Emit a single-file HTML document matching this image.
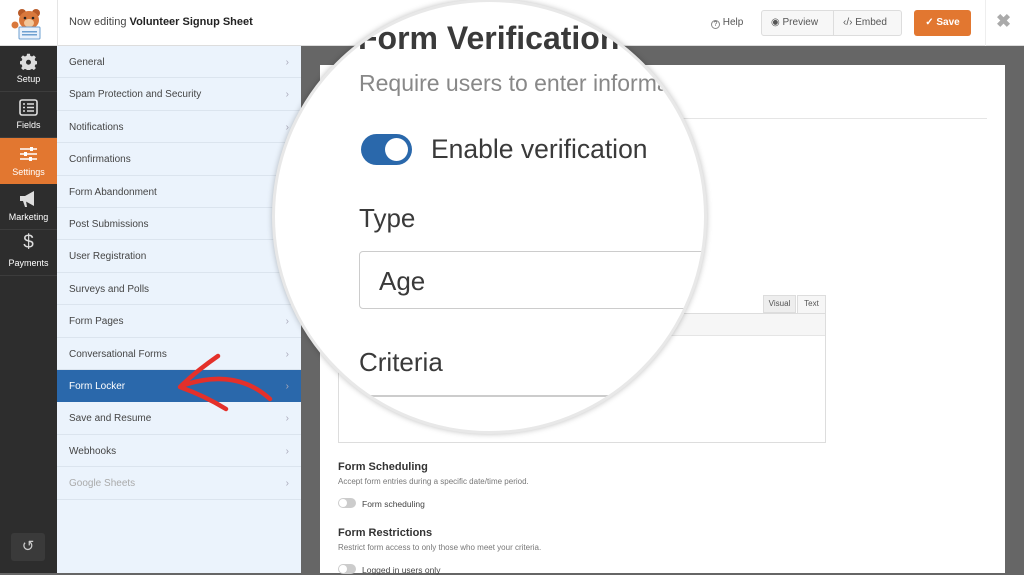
<!DOCTYPE html>
<html><head><meta charset="utf-8"><style>
*{margin:0;padding:0;box-sizing:border-box}
body{width:1024px;height:573px;overflow:hidden;font-family:"Liberation Sans",sans-serif;background:#666;position:relative}
.abs{position:absolute}
.top{left:0;top:0;width:1024px;height:46px;background:#fff;border-bottom:1px solid #ddd}
.side{left:0;top:46px;width:57px;height:527px;background:#2d2d2d}
.si{position:absolute;left:0;width:57px;height:46px;color:#fff;font-size:9px;text-align:center;border-bottom:1px solid #3c3c3c}
.si span{position:absolute;left:0;right:0;bottom:7px}
.panel{left:57px;top:46px;width:244px;height:527px;background:#ebf3fc}
.it{position:absolute;left:0;width:244px;height:32.4px;line-height:33px;padding-left:12px;font-size:10px;color:#444;border-bottom:1px solid #dbe4ee}
.it:after{content:"›";position:absolute;right:12px;color:#aab;font-size:10px}
.lbl{font-size:11px;color:#333}
</style></head><body>
<div class="abs top"></div>
<div class="abs" style="left:57px;top:0;width:1px;height:46px;background:#e5e5e5"></div>
<svg class="abs" style="left:10px;top:6px" width="38" height="34" viewBox="0 0 38 34">
<circle cx="12" cy="7" r="4" fill="#b85a28"/><circle cx="26" cy="7" r="4" fill="#b85a28"/>
<ellipse cx="19" cy="14" rx="10" ry="9" fill="#d9783c"/><ellipse cx="19" cy="17" rx="5" ry="4" fill="#f3c79a"/>
<circle cx="15" cy="12" r="1.3" fill="#222"/><circle cx="23" cy="12" r="1.3" fill="#222"/>
<circle cx="5" cy="19" r="3.5" fill="#d9783c"/>
<rect x="9" y="21" width="21" height="12" rx="1" fill="#e9f1fb" stroke="#6ea0d0"/><rect x="12" y="25" width="15" height="1.5" fill="#6ea0d0"/><rect x="12" y="28" width="15" height="1.5" fill="#6ea0d0"/>
</svg>
<div class="abs" style="left:69px;top:16px;font-size:11px;color:#444">Now editing <b style="color:#222">Volunteer Signup Sheet</b></div>
<div class="abs" style="left:711px;top:17px;font-size:10px;color:#555"><span style="display:inline-block;width:9px;height:9px;border:1px solid #888;border-radius:50%;font-size:7px;line-height:7px;text-align:center;vertical-align:-1px">?</span> Help</div>
<div class="abs" style="left:761px;top:10px;width:141px;height:26px;border:1px solid #ddd;border-radius:3px;background:#f7f7f7"></div>
<div class="abs" style="left:833px;top:11px;width:1px;height:24px;background:#ddd"></div>
<div class="abs" style="left:771px;top:17px;font-size:10px;color:#555">◉ Preview</div>
<div class="abs" style="left:843px;top:17px;font-size:10px;color:#555">‹/› Embed</div>
<div class="abs" style="left:914px;top:10px;width:57px;height:26px;background:#e27730;border-radius:3px;color:#fff;font-size:10px;font-weight:bold;line-height:26px;text-align:center">✓ Save</div>
<div class="abs" style="left:985px;top:0;width:1px;height:46px;background:#eee"></div>
<div class="abs" style="left:996px;top:11px;font-size:18px;color:#aaa;font-weight:bold">✖</div>

<div class="abs side">
<div class="si" style="top:0"><svg class="abs" style="left:20px;top:7px" width="17" height="17" viewBox="0 0 24 24"><path fill="#ddd" d="M10 1h4l.6 3 2.4 1 2.6-1.7 2.8 2.8L20.7 8.7l1 2.4 3 .6v4l-3 .6-1 2.4 1.7 2.6-2.8 2.8-2.6-1.7-2.4 1-.6 3h-4l-.6-3-2.4-1-2.6 1.7-2.8-2.8 1.7-2.6-1-2.4-3-.6v-4l3-.6 1-2.4L1.4 6.1 4.2 3.3 6.8 5l2.4-1z"/><circle cx="12" cy="13" r="3.5" fill="#2d2d2d"/></svg><span>Setup</span></div>
<div class="si" style="top:46px"><svg class="abs" style="left:19px;top:7px" width="19" height="17" viewBox="0 0 19 17"><rect x="1" y="1" width="17" height="15" rx="2" fill="none" stroke="#ddd" stroke-width="1.6"/><path d="M4 5h2M8 5h7M4 8.5h2M8 8.5h7M4 12h2M8 12h7" stroke="#ddd" stroke-width="1.4"/></svg><span>Fields</span></div>
<div class="si" style="top:92px;background:#e27730;border:none"><svg class="abs" style="left:19px;top:8px" width="19" height="16" viewBox="0 0 19 16"><path d="M1 3h17M1 8h17M1 13h17" stroke="#fff" stroke-width="1.6"/><rect x="11" y="1" width="3" height="4" fill="#fff"/><rect x="5" y="6" width="3" height="4" fill="#fff"/><rect x="10" y="11" width="3" height="4" fill="#fff"/></svg><span>Settings</span></div>
<div class="si" style="top:138px"><svg class="abs" style="left:18px;top:6px" width="21" height="18" viewBox="0 0 21 18"><path d="M2 6h5l9-5v15l-9-5H2z" fill="#ddd"/><path d="M5 11l2 6h2l-1-6" fill="#ddd"/></svg><span>Marketing</span></div>
<div class="si" style="top:184px"><div class="abs" style="left:0;right:0;top:2px;font-size:19px;color:#ddd">$</div><span>Payments</span></div>
<div class="abs" style="left:11px;top:487px;width:34px;height:28px;background:#3a3a3a;border-radius:3px;color:#ccc;font-size:15px;text-align:center;line-height:28px">↺</div>
</div>

<div class="abs panel">
<div class="it" style="top:0">General</div>
<div class="it" style="top:32.4px">Spam Protection and Security</div>
<div class="it" style="top:64.8px">Notifications</div>
<div class="it" style="top:97.2px">Confirmations</div>
<div class="it" style="top:129.6px">Form Abandonment</div>
<div class="it" style="top:162px">Post Submissions</div>
<div class="it" style="top:194.4px">User Registration</div>
<div class="it" style="top:226.8px">Surveys and Polls</div>
<div class="it" style="top:259.2px">Form Pages</div>
<div class="it" style="top:291.6px">Conversational Forms</div>
<div class="it" style="top:324px;background:#2a68ab;color:#fff;border:none">Form Locker</div>
<div class="it" style="top:356.4px">Save and Resume</div>
<div class="it" style="top:388.8px">Webhooks</div>
<div class="it" style="top:421.2px;color:#aaa">Google Sheets</div>
</div>

<div class="abs" style="left:320px;top:65px;width:685px;height:508px;background:#fff"></div>
<div class="abs" style="left:680px;top:118px;width:307px;height:1px;background:#e5e5e5"></div>
<div class="abs" style="left:763px;top:295px;width:33px;height:18px;background:#eee;border:1px solid #ddd;font-size:8px;color:#555;text-align:center;line-height:16px">Visual</div>
<div class="abs" style="left:797px;top:295px;width:29px;height:19px;background:#f6f6f6;border:1px solid #ddd;border-bottom:none;font-size:8px;color:#555;text-align:center;line-height:16px">Text</div>
<div class="abs" style="left:338px;top:313px;width:488px;height:130px;border:1px solid #ddd"></div>
<div class="abs" style="left:339px;top:314px;width:486px;height:22px;background:#f6f6f6;border-bottom:1px solid #e5e5e5"></div>
<div class="abs lbl" style="left:338px;top:461px;font-weight:bold">Form Scheduling</div>
<div class="abs" style="left:338px;top:477px;font-size:8px;color:#777">Accept form entries during a specific date/time period.</div>
<div class="abs" style="left:338px;top:498px;width:18px;height:10px;border-radius:5px;background:#ccc"><div style="width:8px;height:8px;margin:1px;border-radius:50%;background:#fff"></div></div>
<div class="abs" style="left:362px;top:499px;font-size:8.5px;color:#444">Form scheduling</div>
<div class="abs lbl" style="left:338px;top:527px;font-weight:bold">Form Restrictions</div>
<div class="abs" style="left:338px;top:543px;font-size:8px;color:#777">Restrict form access to only those who meet your criteria.</div>
<div class="abs" style="left:338px;top:564px;width:18px;height:10px;border-radius:5px;background:#ccc"><div style="width:8px;height:8px;margin:1px;border-radius:50%;background:#fff"></div></div>
<div class="abs" style="left:362px;top:565px;font-size:8.5px;color:#444">Logged in users only</div>

<div class="abs" style="left:272px;top:-1px;width:435px;height:435px;border-radius:50%;background:#fff;border:3px solid #e8e8e8;box-shadow:0 0 6px rgba(0,0,0,.25);overflow:hidden">
 <div class="abs" style="left:83px;top:18px;font-size:32px;font-weight:bold;color:#3a3a3a;white-space:nowrap">Form Verification</div>
 <div class="abs" style="left:84px;top:68px;font-size:23px;color:#888;white-space:nowrap">Require users to enter information</div>
 <div class="abs" style="left:86px;top:132px;width:51px;height:31px;border-radius:16px;background:#2a68ab"><div style="position:absolute;right:4px;top:4px;width:23px;height:23px;border-radius:50%;background:#fff"></div></div>
 <div class="abs" style="left:156px;top:132px;font-size:26.5px;color:#3a3a3a;white-space:nowrap">Enable verification</div>
 <div class="abs" style="left:84px;top:201px;font-size:26px;color:#3a3a3a">Type</div>
 <div class="abs" style="left:84px;top:249px;width:420px;height:58px;border:1.5px solid #ccc;border-radius:4px"></div>
 <div class="abs" style="left:104px;top:264px;font-size:26px;color:#3a3a3a">Age</div>
 <div class="abs" style="left:84px;top:345px;font-size:26px;color:#3a3a3a">Criteria</div>
 <div class="abs" style="left:84px;top:393px;width:420px;height:1.5px;background:#ccc"></div>
</div>

<svg class="abs" style="left:0;top:0" width="1024" height="573">
<g fill="none" stroke="#e4302a" stroke-width="4.5" stroke-linecap="round" stroke-linejoin="round">
<path d="M218 356 Q195 372 180 387 Q205 396 226 409"/>
<path d="M181 386 Q235 367 270 399"/>
</g>
</svg>
</body></html>
